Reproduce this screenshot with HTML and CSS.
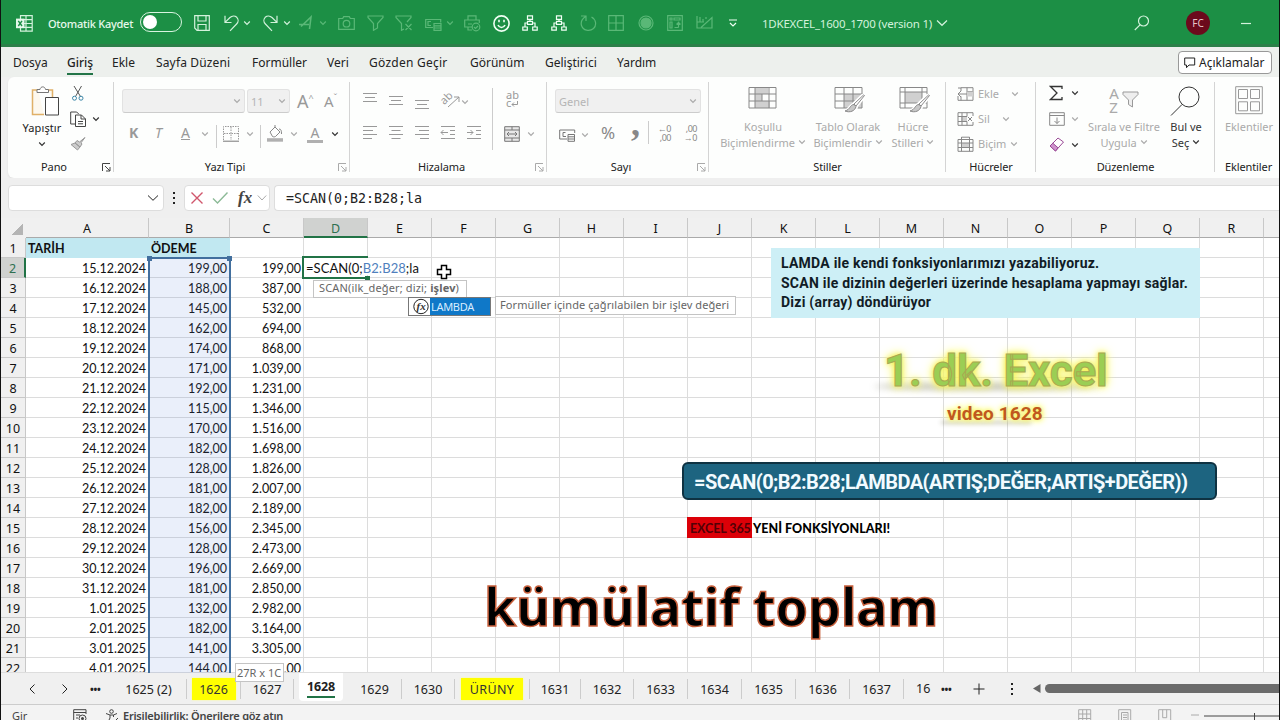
FILE: index.html
```
<!DOCTYPE html>
<html lang="tr">
<head>
    <meta charset="UTF-8">
    <meta name="viewport" content="width=device-width, initial-scale=1.0">
    <title>1DKEXCEL_1600_1700 (version 1)</title>
    <link rel="stylesheet" href="styles.css">
</head>
<body>
    <svg class="defs">
        <symbol id="chev" viewBox="0 0 8 6"><path d="M1.2 1.5 4 4.3 6.8 1.5"/></symbol>
        <symbol id="launch" viewBox="0 0 9 9"><path d="M.5 8V.5H8M3 3l5 5M8 4v4H4"/></symbol>
        <symbol id="tree" viewBox="0 0 16 16"><path d="M5.5.8h5v3.5h-5zM8 4.3v2M5.5 6.3h5v3h-5zM.8 12h4.5v3.2H.8zM10.7 12h4.5v3.2h-4.5zM5.5 8H3v4M10.5 8H13v4"/></symbol>
        <symbol id="brush" viewBox="0 0 22 20"><path class="halo" d="M20.500 1 11 10l2 2 8.500-10.500zM11 11c-4 0-3.500 5-9 6.500 5 2 10 0 11-4.500z"/><path class="brush" d="M20.500 1 11 10l2 2 8.500-10.500z"/><path class="brush tip" d="M11 10.500c-4 0-3.500 5-9 6.500 5 2 10 0 11-4.500z"/></symbol>
    </svg>

    <div class="window">
        <div class="titlebar">
            <svg class="logo" width="17" height="17" viewBox="0 0 17 17"><path d="M4.500 4V.6h11.700v15.600H4.500V13M10 .6v15.600M4.500 4.600h11.700M8 8.500h8.200M4.500 12.400h11.700"/><path class="solid" d="M0 3.600h8.500v9.600H0z"/><path class="ex" d="M2.300 5.800 6 11M6 5.800 2.300 11"/></svg>
            <span class="autosave">Otomatik Kaydet</span>
            <span class="toggle"><i></i></span>
            <svg width="16" height="16"><path d="M.7.7h14.600v14.600H3L.7 13zM4 .7V6h8V.7M4 15.300V9.500h8v5.800"/></svg>
            <svg width="16" height="17"><path d="M1 .8v6.700h6.500M1.300 7.200 6 2.500c2-2 5-1.900 6.800-.2 1.800 1.900 1.700 4.800-.2 6.700L6 15.800"/></svg>
            <svg class="chev" width="8" height="6"><use href="#chev"/></svg>
            <svg width="16" height="17"><path d="M15 .8v6.700H8.500M14.700 7.200 10 2.500C8 .5 5 .6 3.200 2.300 1.400 4.200 1.500 7.100 3.400 9l6.600 6.800"/></svg>
            <svg class="chev" width="8" height="6"><use href="#chev"/></svg>
            <svg class="dim" width="16" height="16"><path stroke-width="1.600" d="M1 9.500h10M3 11.500 13 2l-1.500 12"/></svg>
            <svg class="chev dim" width="8" height="6"><use href="#chev"/></svg>
            <svg class="dim" width="17" height="16"><path d="M.7 3.500h4l1-1.800h5.600l1 1.800h4v10.800H.7z"/><circle cx="8.500" cy="8.700" r="3.300"/></svg>
            <svg class="dim" width="17" height="16"><path d="M1 1h15v1.500L10.500 8.500V13l-4 2.300V8.500L1 2.500z"/></svg>
            <svg class="dim" width="18" height="16"><path d="M12 7l4-4.500V1H1v1.500L6.500 8.500v6.800L9 14M10.500 9l6 6M16.500 9l-6 6"/></svg>
            <svg class="dim" width="17" height="16"><path d="M8 12.500H.7v-8h15v3M6 6.500H3v4h3M9 8.500h7v6.800H9zM9 10.800h7M9 13h7"/></svg>
            <svg class="chev dim" width="8" height="6"><use href="#chev"/></svg>
            <svg class="dim" width="17" height="17"><path d="M4 5V.8h8V5M8 12H.7V5h14.600v3M4 12v3h4M4 9h4"/><circle cx="12" cy="12" r="3.800"/><path d="m10 12 1.500 1.500L14 11"/></svg>
            <svg class="smile" width="17" height="17"><circle cx="8.500" cy="8.500" r="7.600"/><path d="M5 10c1.500 3.300 5.500 3.300 7 0M6 4.700v2.600M11 4.700v2.600"/></svg>
            <svg class="bright" width="16" height="16"><use href="#tree"/></svg>
            <svg class="bright" width="16" height="16"><use href="#tree"/></svg>
            <svg class="dim" width="17" height="17"><path d="M1 1h5v5M5.500 1.500C2 4 .5 7 1.500 10.500c1.500 5 8 6.500 12 3 3.500-3.500 2.500-9-2-11.500"/></svg>
            <svg class="dim" width="16" height="16"><path d="M.7.7h14.600v14.600H.7zM8 .7v14.600M.7 8h14.600"/></svg>
            <svg class="dim" width="16" height="16"><circle cx="8" cy="8" r="7"/><circle class="dot" cx="8" cy="8" r="5"/></svg>
            <svg class="dim" width="16" height="16"><path d="M.7.7h14.600v14.600H.7zM3 3h2v2H3zM7 3h6v2H7zM3 7h2v6H3zM11.500 12.500V7.500l-2 2M11.500 7.500l2 2M7.500 12.500h4"/></svg>
            <svg class="dim" width="17" height="16"><path d="M1 1v12h15V2.500L5 12.500M4 2v5M7 4v3M10 2v2M1 7h7"/></svg>
            <svg class="bright" width="10" height="9"><path d="M1 1h8M2 4l3 3 3-3"/></svg>
            <span class="doc">1DKEXCEL_1600_1700 (version 1)</span>
            <svg class="chev" width="12" height="8" viewBox="0 0 12 8"><path d="M1 1.500 6 6.300l5-4.800"/></svg>
            <svg width="16" height="16"><circle cx="9.500" cy="6" r="5"/><path d="M6 9.800.8 15"/></svg>
            <span class="avatar">FC</span>
            <svg width="12" height="3"><path d="M1 1.500h10"/></svg>
        </div>

        <div class="menu">
            <span>Dosya</span><span class="on">Giriş</span><span>Ekle</span><span>Sayfa Düzeni</span><span>Formüller</span><span>Veri</span><span>Gözden Geçir</span><span>Görünüm</span><span>Geliştirici</span><span>Yardım</span>
            <div class="comments"><svg width="12" height="12"><path d="M.7 1h10v7H5L2.500 10.700V8H.7z"/></svg>Açıklamalar</div>
        </div>

        <div class="ribbon">
            <div class="group g-pano">
                <div class="body">
                    <div class="paste">
                        <svg width="28" height="31"><path stroke="#e0b068" stroke-width="1.500" fill="#fdf8ee" d="M7 4H1.500v24.500H13M17 4h4.500v7"/><path stroke="#777" fill="#fff" d="M6 6.500V3.500h3c.5-3.500 5-3.500 5.500 0h3v3z"/><path stroke="#444" fill="#fff" d="M14.500 11.500h13v17.500h-13z"/></svg>
                        <span>Yapıştır</span>
                        <svg class="chev dark" width="8" height="6"><use href="#chev"/></svg>
                    </div>
                    <div class="clip">
                        <svg width="14" height="17"><path stroke="#555" d="M3 1l6.500 10.500M10.500 1 4.500 11.500"/><circle stroke="#3c87a8" cx="3.500" cy="13.200" r="2"/><circle stroke="#3c87a8" cx="10" cy="13.200" r="2"/></svg>
                        <div><svg width="17" height="16"><path stroke="#444" d="M5 13H.7V1h6l2 2M5.500 4h6l4 4v7.500h-10zM11 4v4h4.500M8 10.500h5M8 12.800h5"/></svg><svg class="chev dark" width="8" height="6"><use href="#chev"/></svg></div>
                        <svg width="16" height="15"><path stroke="#999" fill="#ccc" d="M15 1.500 9.500 6 7 4.500 5 7l5 4 2-3-1-1.200zM5 7 1 8.500 7.500 14l2.500-3z"/></svg>
                    </div>
                </div>
                <div class="label"><i></i><span>Pano</span><svg class="on" width="9" height="9"><use href="#launch"/></svg></div>
            </div>

            <div class="group g-font">
                <div class="body col">
                    <div class="row r1">
                        <div class="combo wide"><span></span><svg class="chev" width="8" height="6"><use href="#chev"/></svg></div>
                        <div class="combo size"><span>11</span><svg class="chev" width="8" height="6"><use href="#chev"/></svg></div>
                        <span class="glyph big">A<sup>^</sup></span>
                        <span class="glyph">A<sup>ˇ</sup></span>
                    </div>
                    <div class="row r2">
                        <b>K</b><em>T</em><u>A</u><svg class="chev" width="8" height="6"><use href="#chev"/></svg>
                        <i class="bar"></i>
                        <svg width="16" height="16"><path stroke-dasharray="1.500 1" d="M.5 14V.5h15V14M8 1v13M1 7.500h14"/><path stroke="#777" d="M0 15.200h16"/></svg>
                        <svg class="chev" width="8" height="6"><use href="#chev"/></svg>
                        <i class="bar"></i>
                        <svg width="18" height="18"><path stroke="#888" d="m3 7 5-5 5 5-4.500 4.500c-1 .5-2 .5-3 0zM8 2V0M12 4c2 0 2.500 1.500 2.500 5"/><path class="ink" d="M0 13.200h16v3.500H0z"/></svg>
                        <svg class="chev" width="8" height="6"><use href="#chev"/></svg>
                        <span class="color-a">A</span>
                        <svg class="chev dark" width="8" height="6"><use href="#chev"/></svg>
                    </div>
                </div>
                <div class="label"><i></i><span>Yazı Tipi</span><svg width="9" height="9"><use href="#launch"/></svg></div>
            </div>

            <div class="group g-align">
                <div class="body">
                    <div class="align">
                        <svg width="16" height="16"><path d="M1 1.500h14M3 5.500h10M1 9.500h14"/></svg>
                        <svg width="16" height="16"><path d="M1 4.500h14M3 8.500h10M1 12.500h14"/></svg>
                        <svg width="16" height="18"><path d="M1 8.500h14M3 12.500h10M1 16.500h14"/></svg>
                        <div class="orient"><span>ab</span><svg width="16" height="16"><path d="M4 15 15 5M10 5h5v5"/></svg></div>
                        <svg class="chev" width="8" height="6"><use href="#chev"/></svg>
                        <svg width="16" height="16"><path d="M1 2.500h14M1 6.500h10M1 10.500h14M1 14.500h9"/></svg>
                        <svg width="16" height="16"><path d="M1 2.500h14M3.500 6.500h9M1 10.500h14M3.500 14.500h9"/></svg>
                        <svg width="16" height="16"><path d="M1 2.500h14M5 6.500h10M1 10.500h14M6 14.500h9"/></svg>
                        <svg width="16" height="16"><path d="M1 2.500h14M10 6.500h5M10 10.500h5M1 14.500h14M1 8.500h7M3.500 6 1 8.500 3.500 11"/></svg>
                        <svg width="16" height="16"><path d="M1 2.500h14M10 6.500h5M10 10.500h5M1 14.500h14M1 8.500h6M4.500 6 7 8.500 4.500 11"/></svg>
                    </div>
                    <i class="bar tall"></i>
                    <div class="wrap">
                        <div class="abc">ab<br>c<svg width="8" height="7"><path d="M6.500 0v3.500H1M3 1.500 1 3.500l2 2"/></svg></div>
                        <div><svg width="16" height="16"><path stroke="#777" fill="#e8e8e8" d="M.7.7h14.600v14.600H.7zM.7 4h14.600M.7 12h14.600M8 .7V4M8 12v3.300M3 8h10M5 6 3 8l2 2M11 6l2 2-2 2"/></svg><svg class="chev" width="8" height="6"><use href="#chev"/></svg></div>
                    </div>
                </div>
                <div class="label"><i></i><span>Hizalama</span><svg width="9" height="9"><use href="#launch"/></svg></div>
            </div>

            <div class="group g-num">
                <div class="body col">
                    <div class="row r1"><div class="combo"><span>Genel</span><svg class="chev" width="8" height="6"><use href="#chev"/></svg></div></div>
                    <div class="row r2">
                        <svg width="17" height="16"><path stroke="#777" d="M8 12H.7V3h15v3M6.500 5.500H4v4h3M9 7.500h6.500v6.800H9zM9 9.800h6.500M9 12h6.500"/></svg>
                        <svg class="chev" width="8" height="6"><use href="#chev"/></svg>
                        <span class="pct">%</span><span class="comma">,</span>
                        <i class="bar"></i>
                        <span class="dec">←0<br>,00</span><span class="dec">,00<br>→0</span>
                    </div>
                </div>
                <div class="label"><i></i><span>Sayı</span><svg width="9" height="9"><use href="#launch"/></svg></div>
            </div>

            <div class="group g-style">
                <div class="body">
                    <div class="big-btn w1"><svg width="30" height="28"><path class="ink soft" d="M7 1h13v7H7zM7 8h7v7H7zM7 15h15v7H7z"/><path stroke="#888" d="M1 1.500h27v20.500H1zM1 8h27M1 15h27M7 1.500V22M21 1.500V22M14 8v7"/></svg><span>Koşullu</span><span>Biçimlendirme <svg class="chev" width="8" height="6"><use href="#chev"/></svg></span></div>
                    <div class="big-btn w2"><svg width="28" height="28"><path class="ink soft" d="M10 8h18v14H10z"/><path stroke="#888" fill="none" d="M1 1.500h27v20.500H1zM1 8h27M1 15h27M10 1.500V22M19 1.500V22"/><use href="#brush" x="9" y="8" width="22" height="20"/></svg><span>Tablo Olarak</span><span>Biçimlendir <svg class="chev" width="8" height="6"><use href="#chev"/></svg></span></div>
                    <div class="big-btn w3"><svg width="28" height="28"><path class="ink soft" d="M6 6h17v11H6z"/><path stroke="#888" d="M1 1.500h27v20.500H1zM1 6h27M1 17h27M6 1.500V22M23 1.500V22"/><use href="#brush" x="9" y="8" width="22" height="20"/></svg><span>Hücre</span><span>Stilleri <svg class="chev" width="8" height="6"><use href="#chev"/></svg></span></div>
                </div>
                <div class="label even"><i></i><span>Stiller</span><i></i></div>
            </div>

            <div class="group g-cells">
                <div class="body col">
                    <div class="cell-btn"><svg width="17" height="14"><path stroke="#888" d="M4 4V.7h12v12.600H1V9M1 1h3M4 9.500v4M10 .7v12.600M10 4.500h6M1 7h9M4 4 1 7l3 3"/><path class="ink soft" d="M10 4.500h6v5h-6z"/></svg>Ekle<svg class="chev m1" width="8" height="6"><use href="#chev"/></svg></div>
                    <div class="cell-btn"><svg width="17" height="14"><path class="ink soft" d="M4 4.500h6v5H4z"/><path stroke="#888" d="M1 .7h15V4M1 4.500h9M1 9.500h9M1 .7v12.600h15V10M5 .7v12.600M10 .7v3.800M10 9.500v3.800M11 5l4 4M15 5l-4 4"/></svg>Sil<svg class="chev m2" width="8" height="6"><use href="#chev"/></svg></div>
                    <div class="cell-btn"><svg width="17" height="16"><path class="ink soft" d="M4 7h9v4H4z"/><path stroke="#888" d="M1 3.500h15v11.800H1zM1 7h15M1 11.500h15M4.500 3.500v11.800M12.500 3.500v11.800M4.500 1v2M12.500 1v2M4.500 1.200h8"/></svg>Biçim<svg class="chev" width="8" height="6"><use href="#chev"/></svg></div>
                </div>
                <div class="label even"><i></i><span>Hücreler</span><i></i></div>
            </div>

            <div class="group g-edit">
                <div class="body">
                    <div class="edit">
                        <svg width="16" height="16"><path stroke="#333" stroke-width="1.300" d="M13 4V1.500H1.500L8 8l-6.500 6.500H13V12"/></svg><svg class="chev dark" width="8" height="6"><use href="#chev"/></svg>
                        <svg width="16" height="14"><path stroke="#888" d="M.7.700h14.600v12.600H.7zM.7 3.500h14.600M8 5.500v6M5.500 9 8 11.500 10.500 9"/></svg><svg class="chev" width="8" height="6"><use href="#chev"/></svg>
                        <svg width="16" height="16"><path stroke="#9a4a96" fill="#fff" d="m1 9 8-8 5.500 4L6.500 14z"/><path stroke="#9a4a96" fill="#cf93cd" d="m1 9 2.800-2.800L9 10.800 6.500 14z"/></svg><svg class="chev dark" width="8" height="6"><use href="#chev"/></svg>
                    </div>
                    <div class="big-btn w4"><div class="az"><span>A<br>Z</span><svg width="17" height="18"><path stroke="#999" fill="#eee" d="M1 1h15v2.500L10.500 9v7l-4-2.500V9L1 3.500z"/></svg></div><span>Sırala ve Filtre</span><span>Uygula <svg class="chev" width="8" height="6"><use href="#chev"/></svg></span></div>
                    <div class="big-btn w5 dark"><svg width="30" height="30"><circle cx="18" cy="11" r="10"/><path d="M11 18.500 0 29.500"/></svg><span>Bul ve</span><span>Seç <svg class="chev dark" width="8" height="6"><use href="#chev"/></svg></span></div>
                </div>
                <div class="label even"><i></i><span>Düzenleme</span><i></i></div>
            </div>

            <div class="group g-add">
                <div class="body"><div class="big-btn"><svg width="28" height="29"><path stroke="#999" d="M.7.700h26.600v27H.7zM3.500 3.500h9v9h-9zM15.500 3.500h9v9h-9zM3.500 15.800h9v9h-9zM15.500 15.800h9v9h-9z"/></svg><span>Eklentiler</span></div></div>
                <div class="label"><i></i><span>Eklentiler</span><i></i></div>
            </div>
        </div>

        <div class="formula-bar">
            <div class="namebox"><svg width="12" height="8" viewBox="0 0 12 8"><path d="M1 1.500 6 6.300l5-4.800"/></svg></div>
            <svg width="4" height="14"><path class="dots" d="M1 1h2v2H1zM1 6h2v2H1zM1 11h2v2H1z"/></svg>
            <div class="fx">
                <svg width="14" height="14"><path stroke="#d0566c" stroke-width="1.400" d="m1.500 1.500 11 11M12.500 1.500l-11 11"/></svg>
                <svg width="17" height="14"><path stroke="#8cba97" stroke-width="1.400" d="m1 7.500 4.500 4.500L15.500 1.500"/></svg>
                <span>fx</span>
                <svg width="10" height="8"><path stroke="#aaa" d="M.8 1.500 5 6l4.200-4.500"/></svg>
            </div>
            <div class="input">=SCAN(0;B2:B28;la</div>
        </div>

        <div class="sheet">
            <div class="grid" id="grid"></div>
            <div class="range"><i></i><i></i></div>
            <div class="active-cell">=SCAN(0;<span>B2:B28</span>;la<i></i></div>
            <div class="hint">SCAN(ilk_değer; dizi; <b>işlev</b>)</div>
            <div class="suggest"><svg width="18" height="17"><circle cx="9" cy="8.500" r="7.200"/><text x="4.500" y="12">fx</text></svg><span>LAMBDA</span></div>
            <div class="hint desc">Formüller içinde çağrılabilen bir işlev değeri</div>
            <svg class="cursor" width="16" height="16"><path d="M5.500 1.500h5v4h4v5h-4v4h-5v-4h-4v-5h4z"/></svg>
            <div class="note">LAMDA ile kendi fonksiyonlarımızı yazabiliyoruz.<br>SCAN ile dizinin değerleri üzerinde hesaplama yapmayı sağlar.<br>Dizi (array) döndürüyor</div>
            <div class="art">1. dk. Excel</div>
            <div class="art-sub">video 1628</div>
            <div class="formula-box">=SCAN(0;B2:B28;LAMBDA(ARTIŞ;DEĞER;ARTIŞ+DEĞER))</div>
            <div class="tag"><span>EXCEL 365</span><b>YENİ FONKSİYONLARI!</b></div>
            <div class="caption">kümülatif toplam</div>
            <div class="size-tip">27R x 1C</div>
        </div>

        <div class="tabs">
            <div class="nav"><svg width="8" height="12"><path d="M6.500 1.500 2 6l4.500 4.500"/></svg><svg width="8" height="12"><path d="M1.500 1.500 6 6l-4.500 4.500"/></svg><b>•••</b></div>
            <span>1625 (2)</span><span><mark>1626</mark></span><span>1627</span><span class="on"><b>1628</b></span><span>1629</span><span>1630</span><span><mark class="long">ÜRÜNY</mark></span><span>1631</span><span>1632</span><span>1633</span><span>1634</span><span>1635</span><span>1636</span><span>1637</span>
            <div class="more"><em>16</em><b>•••</b><svg width="12" height="12"><path d="M6 .5v11M.5 6h11"/></svg><svg width="4" height="12"><path class="dots" d="M1 0h2v2H1zM1 5h2v2H1zM1 10h2v2H1z"/></svg></div>
            <div class="scroll"><svg width="8" height="10"><path class="dots" d="M7.500 0v9L0 4.500z"/></svg><i></i></div>
        </div>

        <div class="status">
            <span class="mode">Gir</span>
            <svg width="14" height="14"><path d="M13 5V.7H.7v11.600H6M.7 3.500H13M3 6h4M3 9h2"/><circle cx="9.500" cy="9.500" r="3.500"/><circle class="dots" cx="9.500" cy="9.500" r="1.500"/></svg>
            <svg width="14" height="14"><circle cx="6.500" cy="2.500" r="1.800"/><path d="M1 4.500 5 6v3l-2 4M12 4.500 8.500 6v2M5 6h3.500M7 11l2 2 4-4"/></svg>
            <b>Erişilebilirlik: Önerilere göz atın</b>
            <svg class="v v1" width="14" height="14"><path d="M.7.700h12v14M.7.700v14M4.700.7v14M8.700.7v14M.7 5h12M.7 9.500h12"/></svg>
            <svg class="v v2" width="14" height="14"><path d="M.7.700h12v14M.7.700v14M3.500 14V3.500h6.500V14M5 6h4M5 8.500h4M5 11h4"/></svg>
            <svg class="v v3" width="14" height="14"><path d="M.7.700h12v14M.7.700v14M4.700.7v8h4V.7"/></svg>
            <svg class="zoom" width="88" height="12"><path class="minus" d="M0 6h8"/><path d="M13 7h75M63.500 4v7"/></svg>
        </div>
    </div>

    <script>
        const dates = ['15.12.2024', '16.12.2024', '17.12.2024', '18.12.2024', '19.12.2024', '20.12.2024', '21.12.2024', '22.12.2024', '23.12.2024', '24.12.2024', '25.12.2024', '26.12.2024', '27.12.2024', '28.12.2024', '29.12.2024', '30.12.2024', '31.12.2024', '1.01.2025', '2.01.2025', '3.01.2025', '4.01.2025'];
        const payments = [199, 188, 145, 162, 174, 171, 192, 115, 170, 182, 128, 181, 182, 156, 128, 196, 181, 132, 182, 141, 144];
        const totals = ['199', '387', '532', '694', '868', '1.039', '1.231', '1.346', '1.516', '1.698', '1.826', '2.007', '2.189', '2.345', '2.473', '2.669', '2.850', '2.982', '3.164', '3.305', ''];
        const letters = 'ABCDEFGHIJKLMNOPQRS'.split('');
        const grid = document.getElementById('grid');

        function addCell(text, cls) {
            const cell = document.createElement('div');
            cell.textContent = text;
            cell.className = cls;
            grid.appendChild(cell);
        }

        // Column letters
        addCell('', 'head corner');
        letters.forEach(l => addCell(l === 'S' ? '' : l, l === 'D' ? 'head sel' : 'head'));

        // Rows 1 to 22
        for (let r = 1; r <= 22; r++) {
            addCell(r, r === 2 ? 'num sel' : 'num');
            letters.forEach((l, c) => {
                let text = '';
                if (r === 1 && c < 2) text = ['TARİH', 'ÖDEME'][c];
                if (r > 1 && c < 3) text = [dates[r - 2], payments[r - 2] + ',00', totals[r - 2] + ',00'][c];
                addCell(text, r === 1 && c < 2 ? 'title' : 'cell');
            });
        }
    </script>
</body>
</html>
```
FILE: styles.css
```
* {
    box-sizing: border-box;
}
body {
    margin: 0;
    font-family: "Noto Sans", "Open Sans", sans-serif;
    font-size: 12px;
    color: #222;
    overflow: hidden;
}
svg {
    fill: none;
    stroke: currentColor;
    display: block;
    flex: none;
}
.defs {
    display: none;
}
.dots {
    fill: currentColor;
    stroke: none;
}
.window {
    width: 1280px;
    height: 720px;
    overflow: hidden;
    border-left: 1px solid #111;
    border-right: 1px solid #111;
    background-color: #f0f0f0;
    display: flex;
    flex-direction: column;
}

/* title bar */
.titlebar {
    height: 47px;
    flex: none;
    background-color: #1c8f45;
    border-bottom: 3px solid #2c8049;
    color: #d3f2dc;
    display: grid;
    grid-template-columns: 32px 92px 54px 30px 19px 19px 21px 15px 21px 19px 29px 28px 30px 21px 18px 29px 29px 29px 29px 28px 30px 29px 29px 32px 34px 174px 198px 52px 54px 20px;
    padding: 2px 0 0 15px;
    align-items: center;
    white-space: nowrap;
}
.titlebar svg {
    stroke-width: 1.2;
}
.titlebar .dim {
    color: #5ab877;
}
.titlebar .dot {
    fill: #5ab877;
}
.titlebar .bright, .smile {
    color: #f0fff4;
}
.titlebar .smile {
    stroke-width: 1.6;
}
.logo .solid {
    fill: #e4f7ea;
    stroke: none;
}
.logo .ex {
    stroke: #1c8f45;
    stroke-width: 1.4;
}
.autosave {
    font-size: 11px;
    font-weight: 500;
    letter-spacing: -0.25px;
    color: #e6f8eb;
}
.toggle {
    width: 42px;
    height: 20px;
    margin-top: -2px;
    border: 1px solid #d8f4e0;
    border-radius: 10px;
    display: flex;
    align-items: center;
    padding-left: 2px;
}
.toggle i {
    width: 14px;
    height: 14px;
    border-radius: 50%;
    background-color: #fff;
}
.doc {
    font-size: 11.5px;
    letter-spacing: -0.22px;
}
.avatar {
    width: 24px;
    height: 24px;
    border-radius: 50%;
    background-color: #6b0a1c;
    color: #e6c5cb;
    font-size: 10px;
    display: flex;
    align-items: center;
    justify-content: center;
}

/* ribbon tabs */
.menu {
    height: 30px;
    flex: none;
    display: grid;
    grid-template-columns: 54px 45px 44px 96px 75px 42px 101px 75px 72px 561px 94px;
    padding: 1px 0 0 12px;
    align-items: center;
    white-space: nowrap;
    background-color: #edf0ed;
}
.menu span {
    justify-self: start;
    line-height: 21px;
    padding-top: 1px;
    border-bottom: 2px solid transparent;
}
.menu span:nth-child(4) {
    letter-spacing: 0.15px;
}
.menu span:nth-child(7) {
    letter-spacing: 0.25px;
}
.menu .on {
    font-weight: 500;
    border-color: #227447;
}
.comments {
    height: 23px;
    border: 1px solid #999;
    border-radius: 4px;
    background-color: #fff;
    display: flex;
    align-items: center;
    gap: 3px;
    padding-left: 5px;
}

/* ribbon */
.ribbon {
    height: 101px;
    flex: none;
    margin-left: 7px;
    background-color: #fdfefd;
    border-radius: 6px 0 0 6px;
    display: flex;
    font-size: 11px;
    color: #999;
    box-shadow: 0 1px 2px #ddd;
}
.group {
    flex: none;
    display: flex;
    flex-direction: column;
    background: linear-gradient(#d4d4d4, #d4d4d4) right 5px / 1px 90px no-repeat;
}
.group > .body {
    height: 79px;
    display: flex;
}
.group > .col {
    flex-direction: column;
}
.label {
    height: 22px;
    color: #222;
    display: grid;
    grid-template-columns: 0 1fr 12px;
    align-items: center;
    text-align: center;
    white-space: nowrap;
    line-height: 22px;
}
.label span {
    padding-right: 2px;
    letter-spacing: -0.1px;
}
.label.even {
    grid-template-columns: 9px 1fr 7px;
}
.g-add .label {
    grid-template-columns: 9px 1fr 4px;
}
.label svg {
    color: #aaa;
}
.label svg.on {
    color: #444;
}
.chev {
    stroke-width: 1.2;
}
.ribbon .chev {
    color: #aaa;
}
.ribbon .dark, .ribbon .chev.dark {
    color: #333;
}
.ink {
    fill: #b0b0b0;
    stroke: none;
}
.soft {
    fill: #d0d0d0;
}
.halo {
    fill: #fff;
    stroke: #fff;
    stroke-width: 4;
}
.brush {
    fill: #fff;
    stroke: #8a8a8a;
}
.brush.tip {
    fill: #c8c8c8;
}
.g-pano { width: 106px; }
.g-font { width: 236px; }
.g-align { width: 197px; }
.g-num { width: 162px; }
.g-style { width: 237px; }
.g-cells { width: 90px; }
.g-edit { width: 179px; }
.g-add { width: 64px; background: none; }

.paste {
    width: 63px;
    padding: 9px 0 0 5px;
    display: flex;
    flex-direction: column;
    align-items: center;
    color: #222;
}
.paste > svg:first-child {
    margin-left: 5px;
}
.paste span {
    line-height: 17px;
    margin: 2px 0 5px;
    letter-spacing: 0.1px;
}
.clip {
    display: flex;
    flex-direction: column;
    align-items: flex-start;
    gap: 9px;
    padding-top: 8px;
    margin-left: -1px;
}
.clip > svg:first-child {
    margin-left: 1px;
}
.clip > div {
    display: flex;
    align-items: center;
    gap: 5px;
}
.row {
    display: grid;
    align-items: center;
}
.g-font .row {
    padding-left: 8px;
}
.r1 {
    height: 48px;
}
.r2 {
    height: 14px;
}
.g-font .r1 {
    grid-template-columns: 125px 50px 27px 24px;
}
.g-font .r2 {
    grid-template-columns: 26px 26px 20px 15px 7px 23px 14px 7px 23px 17px 24px 10px;
    padding-left: 15px;
    white-space: nowrap;
}
.combo {
    height: 24px;
    background-color: #f0f0f0;
    border: 1px solid #e2e2e2;
    border-bottom-color: #ccc;
    border-radius: 3px;
    display: flex;
    justify-content: space-between;
    align-items: center;
    padding: 0 3px 0 3px;
    color: #b5b5b5;
}
.wide {
    width: 123px;
}
.size {
    width: 43px;
}
.glyph {
    font-size: 15px;
    line-height: 14px;
}
.big {
    font-size: 18px;
}
.glyph sup {
    font-size: 9px;
    line-height: 0;
}
.g-font .r2 b, .g-font .r2 em, .g-font .r2 u {
    font-size: 14px;
    line-height: 14px;
    margin-top: -8px;
}
.g-font .r2 svg, .color-a {
    margin-top: -5px;
}
.color-a {
    width: 16px;
    font-size: 14px;
    line-height: 14px;
    text-align: center;
    border-bottom: 3px solid #b0b0b0;
}
.bar {
    width: 1px;
    height: 23px;
    background-color: #ccc;
}
.tall {
    height: 62px;
    margin-top: 11px;
}
.align {
    width: 142px;
    padding: 15px 0 0 12px;
    display: grid;
    grid-template-columns: 26px 26px 26px 26px 26px;
    grid-template-rows: 19px 30px;
    align-content: start;
    row-gap: 6px;
}
.align > svg:nth-child(n+6) {
    margin-top: 7px;
}
.align .chev {
    margin: 7px 0 0 -5px;
}
.orient {
    display: flex;
}
.orient span {
    font-size: 11px;
    line-height: 13px;
    transform: rotate(-45deg);
    width: 10px;
    height: 14px;
}
.orient svg {
    margin-left: -6px;
}
.wrap {
    padding: 14px 0 0 11px;
}
.wrap > .abc {
    display: block;
    height: 35px;
    font-size: 11px;
    line-height: 8px;
    padding-left: 2px;
}
.abc svg {
    display: inline-block;
    vertical-align: -1px;
}
.wrap > div {
    display: flex;
    align-items: center;
    gap: 7px;
}
.g-num .row {
    padding-left: 8px;
}
.g-num .combo {
    width: 146px;
}
.g-num .r2 {
    grid-template-columns: 22px 20px 30px 17px 7px 26px 20px;
    padding-left: 12px;
    color: #888;
}
.g-num .bar {
    margin-top: -4px;
}
.pct {
    font-size: 17px;
    line-height: 14px;
    margin-top: -4px;
}
.comma {
    font: bold 36px/14px "Liberation Serif", serif;
    margin-top: -24px;
}
.dec {
    font-size: 9px;
    line-height: 9px;
    letter-spacing: -0.5px;
    text-align: right;
    width: 16px;
    margin-top: -3px;
}
.big-btn {
    display: flex;
    flex-direction: column;
    align-items: center;
    padding-top: 9px;
    white-space: nowrap;
    line-height: 16px;
    color: #aaa;
}
.big-btn > svg {
    margin-bottom: 5px;
    height: 28px;
    overflow: visible;
}
.big-btn span .chev {
    display: inline;
    vertical-align: 2px;
}
.w1 { width: 88px; margin-left: 10px; }
.w2 { width: 70px; margin-left: 6px; }
.w3 { width: 50px; margin-left: 5px; }
.w4 { width: 72px; }
.w5 { width: 42px; margin-left: 5px; }
.g-add .big-btn { width: 64px; padding-left: 4px; }
.cell-btn {
    height: 26px;
    display: flex;
    align-items: center;
    gap: 4px;
    padding-left: 11px;
    color: #aaa;
}
.g-cells .body {
    padding-top: 4px;
}
.m1 { margin-left: 8px; }
.m2 { margin-left: 8px; }
.edit {
    width: 52px;
    padding: 3px 0 0 13px;
    display: grid;
    grid-template-columns: 22px 12px;
    grid-template-rows: 26px 26px 26px;
    align-items: center;
}
.az {
    display: flex;
    align-items: center;
    height: 33px;
    gap: 3px;
}
.az span {
    font-size: 15px;
    line-height: 14px;
    margin-top: -6px;
}
.az svg {
    margin-top: -5px;
}

/* formula bar */
.formula-bar {
    height: 40px;
    flex: none;
    display: flex;
    align-items: center;
    padding-left: 7px;
    background-color: #efefef;
}
.namebox, .fx, .input {
    height: 26px;
    background-color: #fff;
    border: 1px solid #ddd;
    border-radius: 4px;
    display: flex;
    align-items: center;
}
.namebox {
    width: 156px;
    justify-content: flex-end;
    padding-right: 4px;
    margin-right: 8px;
}
.fx {
    width: 86px;
    margin-left: 8px;
    padding-left: 5px;
    gap: 8px;
}
.fx span {
    font: italic bold 17px "Liberation Serif", serif;
    color: #444;
    margin-left: 1px;
}
.fx svg:last-child {
    margin-left: -3px;
}
.input {
    flex: 1;
    margin-left: 4px;
    padding-left: 11px;
    font: 13.3px "DejaVu Sans Mono", monospace;
    border-right: none;
    border-radius: 4px 0 0 4px;
}

/* sheet */
.sheet {
    height: 455px;
    flex: none;
    position: relative;
    background-color: #fff;
}
.grid {
    height: 455px;
    overflow: hidden;
    display: grid;
    grid-template-columns: 25px 123px 81px 74px repeat(16, 64px);
    grid-auto-rows: 20px;
    font: 12.5px/22px Lato, sans-serif;
    color: #111;
    border-bottom: 1px solid #ddd;
}
.grid > div {
    border-right: 1px solid #dcdcdc;
    border-bottom: 1px solid #dcdcdc;
    white-space: nowrap;
}
.grid .head, .grid .num {
    background-color: #f0f0f0;
    font: 12.5px/21px "Noto Sans", sans-serif;
    text-align: center;
    border-color: #c8c8c8;
}
.grid .head {
    border-bottom-color: #aaa;
}
.grid .corner {
    background: linear-gradient(135deg, #f0f0f0 60%, #b4b4b4 60%);
    border: 3px solid #f0f0f0;
    border-left-width: 8px;
}
.grid .sel {
    background-color: #d0d2d0;
    color: #2e7050;
}
.grid .head.sel {
    border-bottom: 2px solid #217346;
}
.grid .num.sel {
    border-right: 2px solid #217346;
}
.grid .cell {
    text-align: right;
    padding-right: 2px;
}
.grid .title {
    background-color: #c1e8f1;
    border-color: #c1e8f1;
    font-weight: bold;
    padding-left: 2px;
}
.range {
    position: absolute;
    left: 147px;
    top: 39px;
    width: 83px;
    height: 416px;
    border: 2px solid #426f9e;
    border-bottom: none;
    background-color: rgba(90, 135, 215, 0.13);
    display: flex;
    justify-content: space-between;
}
.range i {
    width: 5px;
    height: 5px;
    margin: -3px -3px 0;
    background-color: #426f9e;
}
.active-cell {
    position: absolute;
    left: 301px;
    top: 38px;
    width: 122px;
    height: 23px;
    font: 13px/19px Lato, sans-serif;
    letter-spacing: 0.05px;
    white-space: nowrap;
    padding: 3px 0 0 4px;
    color: #111;
    background: linear-gradient(#217346, #217346) 0 0 / 66px 2px no-repeat, linear-gradient(#217346, #217346) 0 0 / 2px 23px no-repeat, linear-gradient(#217346, #217346) 0 21px / 63px 2px no-repeat, linear-gradient(#fff, #fff) 0 2px / 122px 17px no-repeat;
}
.active-cell span {
    color: #4f7fbd;
}
.active-cell i {
    position: absolute;
    left: 63px;
    top: 20px;
    width: 5px;
    height: 5px;
    background-color: #217346;
}
.hint, .size-tip {
    position: absolute;
    left: 312px;
    top: 62px;
    width: 154px;
    height: 18px;
    border: 1px solid #c4c4c4;
    background-color: #fff;
    color: #666;
    font-size: 11px;
    letter-spacing: 0.15px;
    line-height: 14px;
    padding-left: 5px;
    white-space: nowrap;
}
.hint.desc {
    left: 494px;
    top: 78px;
    width: 241px;
    height: 19px;
    letter-spacing: 0.08px;
    line-height: 16px;
    padding-left: 4px;
}
.size-tip {
    left: 234px;
    top: 445px;
    width: 49px;
    height: 19px;
    line-height: 17px;
    letter-spacing: 0;
    padding-left: 1px;
    z-index: 2;
}
.suggest {
    position: absolute;
    left: 407px;
    top: 79px;
    width: 83px;
    height: 19px;
    border: 1px solid #777;
    background-color: #fff;
    display: flex;
    padding-left: 3px;
}
.suggest text {
    font: italic bold 11px "Liberation Serif", serif;
    fill: #333;
    stroke: none;
}
.suggest span {
    flex: 1;
    background-color: #0f78c8;
    color: #d8ecff;
    font-size: 11px;
    letter-spacing: -0.3px;
    line-height: 18px;
    padding-left: 1px;
}
.cursor {
    position: absolute;
    left: 435px;
    top: 46px;
    fill: #fff;
    stroke: #000;
    stroke-width: 1.5;
}
.note {
    position: absolute;
    left: 770px;
    top: 30px;
    width: 429px;
    height: 70px;
    padding: 6px 10px;
    background-color: #cdeff6;
    font: bold 14px/19.5px Roboto, sans-serif;
    letter-spacing: 0.24px;
    color: #111c26;
    white-space: nowrap;
}
.art {
    position: absolute;
    left: 883px;
    top: 127px;
    font: bold 44px/52px Roboto, sans-serif;
    letter-spacing: -0.2px;
    color: #9bce54;
    -webkit-text-stroke: 1px #a9a850;
    text-shadow: 0 0 5px #f2f25a, 0 0 8px #f6f666, 0 0 12px #f8f870;
    white-space: nowrap;
}
/* flattened shadow at the foot of the word art */
.art::before {
    content: "";
    position: absolute;
    left: -10px;
    bottom: 7px;
    width: 226px;
    height: 7px;
    z-index: -1;
    border-radius: 50%;
    background-color: rgba(90, 90, 60, 0.35);
    filter: blur(3px);
}
.art, .art-sub {
    isolation: isolate;
}
.art-sub {
    position: absolute;
    left: 946px;
    top: 184px;
    font: bold 19px/24px Roboto, sans-serif;
    letter-spacing: 0.1px;
    color: #c0581e;
    text-shadow: 0 0 4px #f5f56a, 0 0 6px #f8f870, 0 0 8px #fbfb80;
    white-space: nowrap;
}
.art-sub::before {
    content: "";
    position: absolute;
    left: -6px;
    bottom: 2px;
    width: 90px;
    height: 3px;
    z-index: -1;
    background-color: rgba(90, 90, 60, 0.3);
    filter: blur(2px);
}
.formula-box {
    position: absolute;
    left: 681px;
    top: 244px;
    width: 535px;
    height: 38px;
    border: 2px solid #0f3242;
    border-radius: 6px;
    background-color: #1d6480;
    color: #f2fbff;
    font: bold 20px/37px Roboto, sans-serif;
    letter-spacing: -0.54px;
    padding-left: 10px;
    white-space: nowrap;
}
.tag {
    position: absolute;
    left: 686px;
    top: 299px;
    display: flex;
    font: bold 12.5px/23px Lato, sans-serif;
    letter-spacing: 0.05px;
    color: #000;
    white-space: nowrap;
}
.tag span {
    width: 65px;
    height: 21px;
    padding-left: 3px;
    letter-spacing: -0.1px;
    background-color: #dc0008;
    color: #520006;
    margin-right: 1px;
}
.caption {
    position: absolute;
    left: 483px;
    top: 350px;
    font: bold 52px/76px "Noto Sans", sans-serif;
    color: #000;
    -webkit-text-stroke: 1.5px #c8603c;
    white-space: nowrap;
}

/* sheet tabs */
.tabs {
    height: 32px;
    flex: none;
    display: grid;
    grid-template-columns: 110px 76px 54px 53px 54px 54px 53px 75px 51px 53px 54px 54px 54px 54px 54px 125px 1fr;
    align-items: center;
    font-size: 12.5px;
    background-color: #f0f0f0;
    border-bottom: 1px solid #ccc;
}
.tabs > span {
    height: 20px;
    line-height: 21px;
    display: flex;
    justify-content: center;
    border-right: 1px solid #ccc;
}
.tabs > .on {
    width: 44px;
    height: 28px;
    align-self: start;
    justify-self: center;
    background-color: #fff;
    border: none;
    border-radius: 0 0 4px 4px;
}
.tabs .on b {
    height: 25px;
    line-height: 27px;
    border-bottom: 2px solid #217346;
    letter-spacing: -0.1px;
}
mark {
    width: 44px;
    height: 22px;
    margin-top: -1px;
    line-height: 23px;
    text-align: center;
    background-color: #ff0;
    color: #333;
    box-shadow: 0 0 2px #ff8;
}
mark.long {
    width: 62px;
    letter-spacing: 0.4px;
}
.nav {
    display: grid;
    grid-template-columns: 33px 29px 30px;
    align-items: center;
    padding-left: 27px;
}
.nav b, .more b {
    font-size: 10px;
    letter-spacing: -0.3px;
}
.more {
    display: grid;
    grid-template-columns: 25px 32px 37px 20px;
    align-items: center;
    padding-left: 12px;
}
.more em {
    font-style: normal;
}
.scroll {
    display: flex;
    align-items: center;
    gap: 4px;
    padding-left: 4px;
    color: #666;
}
.scroll i {
    flex: 1;
    height: 9px;
    border-radius: 5px 0 0 5px;
    background-color: #6b6b6b;
}

/* status bar */
.status {
    height: 15px;
    flex: none;
    display: flex;
    align-items: flex-start;
    padding-top: 4px;
    font-size: 11px;
    line-height: 14px;
    background-color: #f3f3f3;
    overflow: hidden;
    white-space: nowrap;
    color: #444;
}
.mode {
    width: 62px;
    padding-left: 11px;
}
.status > svg {
    margin-left: 10px;
}
.status > svg + svg {
    margin: 0 4px 0 18px;
}
.status b {
    font-weight: 600;
    letter-spacing: -0.22px;
}
.status > .v {
    color: #aaa;
    margin: 0;
}
.status > .v1 {
    margin-left: auto;
}
.status > .v2, .status > .v3 {
    margin: 0 0 0 26px;
}
.status > .zoom {
    margin: 0 0 0 19px;
}
.zoom .minus {
    stroke: #aaa;
}
```
